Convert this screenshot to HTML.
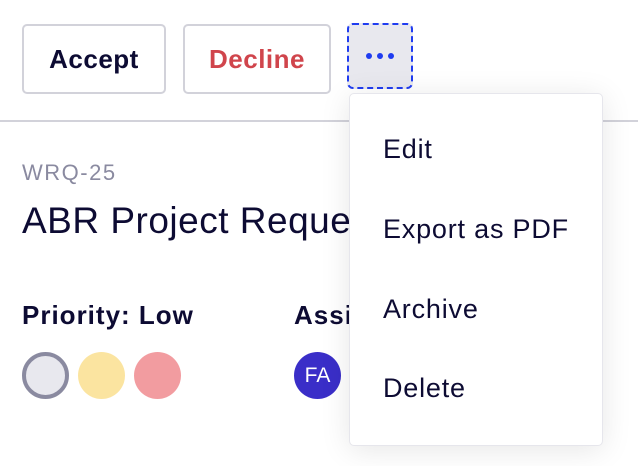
<!DOCTYPE html>
<html><head><style>
body{margin:0;width:638px;height:466px;background:#fff;font-family:"Liberation Sans",sans-serif;color:#0d0b33;position:relative;overflow:hidden}
.btn{position:absolute;top:24px;height:70px;border:2px solid #d2d2da;border-radius:5px;box-sizing:border-box;font-weight:bold;font-size:26px;letter-spacing:0.5px;display:flex;align-items:center;justify-content:center;background:#fff}
.dots{position:absolute;left:347px;top:23px;width:66px;height:66px;box-sizing:border-box;border:2px dashed #1f3cf0;border-radius:6px;background:#e8e8ee;display:flex;align-items:center;justify-content:center;gap:5px}
.dots i{width:6px;height:6px;border-radius:50%;background:#1f3cf0}
.line{position:absolute;left:0;right:0;top:120px;height:2px;background:#d2d2da}
.t{position:absolute;white-space:nowrap}
.c{position:absolute;top:352px;width:47px;height:47px;border-radius:50%;box-sizing:border-box}
.menu{position:absolute;left:349px;top:93px;width:254px;height:353px;background:#fff;border:1px solid #e6e6ec;border-radius:5px;box-sizing:border-box;box-shadow:0 4px 30px rgba(0,0,0,.1)}
.menu div{position:absolute;left:33px;font-size:27px;letter-spacing:0.8px;color:#0d0b33}
</style></head><body>
<div class="btn" style="left:22px;width:144px">Accept</div>
<div class="btn" style="left:183px;width:148px;color:#d0454c">Decline</div>
<div class="dots"><i></i><i></i><i></i></div>
<div class="line"></div>
<div class="t" style="left:22px;top:160px;font-size:22px;letter-spacing:1.5px;color:#8a8aa0">WRQ-25</div>
<div class="t" style="left:22px;top:200px;font-size:37px;letter-spacing:0.5px">ABR Project Request</div>
<div class="t" style="left:22px;top:300px;font-size:26px;letter-spacing:1px;font-weight:bold">Priority: Low</div>
<div class="t" style="left:294px;top:300px;font-size:26px;letter-spacing:1px;font-weight:bold">Assignee</div>
<div class="c" style="left:22px;background:#e8e8ee;border:4px solid #8a8aa0"></div>
<div class="c" style="left:78px;background:#fbe4a0"></div>
<div class="c" style="left:134px;background:#f29ca0"></div>
<div class="c" style="left:294px;background:#3a2ec8;color:#fff;font-size:21px;display:flex;align-items:center;justify-content:center">FA</div>
<div class="menu">
<div style="top:40px">Edit</div>
<div style="top:120px">Export as PDF</div>
<div style="top:200px">Archive</div>
<div style="top:279px">Delete</div>
</div>
</body></html>
